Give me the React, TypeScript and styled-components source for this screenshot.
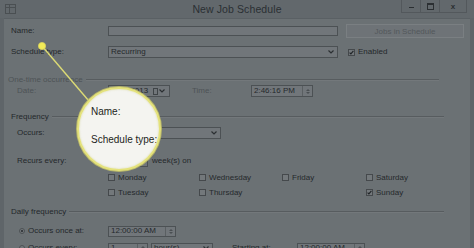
import React from "react";
import styled, { createGlobalStyle } from "styled-components";

const GlobalStyle = createGlobalStyle`
  html, body { margin: 0; padding: 0; width: 474px; height: 248px; overflow: hidden; background: #5f6569; }
  body { font-family: "Liberation Sans", Arial, sans-serif; color: #24282b; }
  #root { width: 474px; height: 248px; }
`;

const Window = styled.div`
  position: relative;
  width: 474px;
  height: 248px;
  overflow: hidden;
  display: flex;
  flex-direction: column;
  background: #5f6569;
`;

const TitleBar = styled.div`
  height: 18px;
  flex-shrink: 0;
  display: grid;
  grid-template-columns: 1fr auto 1fr;
  align-items: start;
  background: #62686c;
`;

const AppIcon = styled.div`
  margin: 4px 0 0 5px;
  width: 9px;
  height: 8px;
  border: 1px solid #4a4f52;
  background: linear-gradient(#4a4f52, #4a4f52) 0 2px / 100% 1px no-repeat,
    linear-gradient(#4a4f52, #4a4f52) 3px 0 / 1px 100% no-repeat;
`;

const Title = styled.div`
  font-size: 10.5px;
  line-height: 19px;
  color: #2a2f33;
  letter-spacing: 0.1px;
`;

const WinButtons = styled.div`
  justify-self: end;
  display: flex;
  margin-right: 7px;
  height: 13px;
`;

const WinButton = styled.div<{ $w: number }>`
  width: ${(p) => p.$w}px;
  height: 13px;
  box-sizing: border-box;
  border-left: 1px solid #53585c;
  border-bottom: 1px solid #53585c;
  &:last-child { border-right: 1px solid #53585c; }
  display: flex;
  align-items: center;
  justify-content: center;
  font-size: 8px;
  color: #2b2f32;
  font-weight: bold;
`;

const MinGlyph = styled.div`
  width: 5px;
  height: 1px;
  margin-top: 3px;
  background: #2b2f32;
`;

const MaxGlyph = styled.div`
  width: 5px;
  height: 4px;
  border: 1px solid #2b2f32;
  border-top-width: 2px;
`;

const Body = styled.div`
  flex: 1;
  margin: 0 4px;
  padding: 0 6px 0 7px;
  background: #6b7174;
  border-top: 1px solid #5a6064;
  display: flex;
  flex-direction: column;
  font-size: 8px;
`;

const Row = styled.div<{ $h: number; $mt: number }>`
  display: flex;
  align-items: center;
  height: ${(p) => p.$h}px;
  margin-top: ${(p) => p.$mt}px;
  flex-shrink: 0;
  white-space: nowrap;
`;

const Label = styled.span<{ $w?: number; $indent?: number; $faded?: boolean; $ml?: number }>`
  flex-shrink: 0;
  box-sizing: border-box;
  width: ${(p) => (p.$w ? `${p.$w}px` : "auto")};
  padding-left: ${(p) => p.$indent ?? 0}px;
  margin-left: ${(p) => p.$ml ?? 0}px;
  color: ${(p) => (p.$faded ? "#4e5356" : "#24282b")};
  font-size: 8px;
  line-height: 10px;
`;

const Field = styled.div<{ $w: number; $h: number; $ml?: number }>`
  flex-shrink: 0;
  box-sizing: border-box;
  width: ${(p) => p.$w}px;
  height: ${(p) => p.$h}px;
  margin-left: ${(p) => p.$ml ?? 0}px;
  border: 1px solid #4c5154;
  background: #71767a;
  display: flex;
  align-items: center;
  padding-left: 2px;
  font-size: 8px;
  color: #25292c;
  overflow: hidden;
`;

const FieldText = styled.span`
  flex: 1;
  line-height: 10px;
`;

const Chevron = styled.svg`
  width: 6px;
  height: 4px;
  margin-right: 3px;
  flex-shrink: 0;
`;

const Spin = styled.div`
  align-self: stretch;
  width: 9px;
  flex-shrink: 0;
  border-left: 1px solid #5a5f62;
  display: flex;
  flex-direction: column;
  align-items: center;
  justify-content: center;
  gap: 1px;
`;

const SpinArrow = styled.div<{ $down?: boolean }>`
  width: 0;
  height: 0;
  border-left: 2px solid transparent;
  border-right: 2px solid transparent;
  ${(p) => (p.$down ? "border-top: 2px solid #4a4f52;" : "border-bottom: 2px solid #4a4f52;")}
`;

const CalButton = styled.div`
  align-self: stretch;
  width: 15px;
  flex-shrink: 0;
  display: flex;
  align-items: center;
  gap: 1px;
  margin-right: 1px;
`;

const CalBox = styled.div`
  width: 5px;
  height: 5px;
  border: 1px solid #3f4447;
`;

const Button = styled.div<{ $w: number; $ml: number }>`
  flex-shrink: 0;
  box-sizing: border-box;
  width: ${(p) => p.$w}px;
  height: 14px;
  margin-left: ${(p) => p.$ml}px;
  border: 1px solid #7a7f82;
  background: #6e7377;
  color: #53585b;
  display: flex;
  align-items: center;
  justify-content: center;
  font-size: 8px;
`;

const Check = styled.div<{ $ml?: number }>`
  flex-shrink: 0;
  box-sizing: border-box;
  width: 7px;
  height: 7px;
  margin-left: ${(p) => p.$ml ?? 0}px;
  border: 1px solid #45494c;
  background: #73787b;
  display: flex;
  align-items: center;
  justify-content: center;
`;

const Radio = styled.div<{ $ml?: number }>`
  flex-shrink: 0;
  box-sizing: border-box;
  width: 6px;
  height: 6px;
  border-radius: 50%;
  margin-left: ${(p) => p.$ml ?? 0}px;
  border: 1px solid #4c5154;
  background: #73787b;
  display: flex;
  align-items: center;
  justify-content: center;
`;

const RadioDot = styled.div`
  width: 2px;
  height: 2px;
  border-radius: 50%;
  background: #25292c;
`;

const GroupRow = styled(Row)`
  gap: 3px;
`;

const GroupLine = styled.div<{ $mr: number }>`
  flex: 1;
  margin-right: ${(p) => p.$mr}px;
  border-top: 1px solid #575c5f;
  border-bottom: 1px solid #73787b;
`;

const DayGrid = styled.div<{ $mt: number }>`
  display: grid;
  grid-template-columns: 91px 83px 84px auto;
  grid-auto-rows: 12px;
  row-gap: 3px;
  margin-left: 97px;
  margin-top: ${(p) => p.$mt}px;
`;

const Day = styled.div`
  display: flex;
  align-items: center;
  gap: 3px;
  font-size: 8px;
  color: #25292c;
  white-space: nowrap;
`;

const Overlay = styled.svg`
  position: absolute;
  left: 0;
  top: 0;
  width: 474px;
  height: 248px;
  pointer-events: none;
`;

const Magnifier = styled.div`
  position: absolute;
  left: 77px;
  top: 87px;
  width: 84px;
  height: 84px;
  box-sizing: border-box;
  border-radius: 50%;
  border: 2px solid #e4e27c;
  box-shadow: 0 0 0 1px #b9b86a, inset 0 0 2px rgba(200, 200, 120, 0.6);
  background: #f4f4f0;
  overflow: hidden;
  display: flex;
  flex-direction: column;
  padding-left: 12px;
`;

const MagLabel = styled.div<{ $mt: number }>`
  margin-top: ${(p) => p.$mt}px;
  font-size: 10px;
  line-height: 12px;
  color: #1d1f21;
  white-space: nowrap;
  display: flex;
  align-items: center;
`;

const MagRule = styled.div`
  width: 12px;
  height: 1px;
  background: #b9bbbb;
  margin-left: 1px;
`;

const ChevronIcon = () => (
  <Chevron viewBox="0 0 6 4">
    <path d="M0.5 0.5 L3 3 L5.5 0.5" fill="none" stroke="#2b2f32" strokeWidth="1.2" />
  </Chevron>
);

const Spinner = () => (
  <Spin>
    <SpinArrow />
    <SpinArrow $down />
  </Spin>
);

const CheckMark = () => (
  <svg width="5" height="5" viewBox="0 0 5 5">
    <path d="M0.6 2.6 L1.9 3.9 L4.4 0.9" fill="none" stroke="#1f2326" strokeWidth="1.1" />
  </svg>
);

const DayItem = ({ name, checked }: { name: string; checked?: boolean }) => (
  <Day>
    <Check>{checked && <CheckMark />}</Check>
    {name}
  </Day>
);

export default function App() {
  return (
    <>
      <GlobalStyle />
      <Window>
        <TitleBar>
          <AppIcon />
          <Title>New Job Schedule</Title>
          <WinButtons>
            <WinButton $w={19}><MinGlyph /></WinButton>
            <WinButton $w={19}><MaxGlyph /></WinButton>
            <WinButton $w={28}>x</WinButton>
          </WinButtons>
        </TitleBar>
        <Body>
          <Row $h={14} $mt={5}>
            <Label $w={97}>Name:</Label>
            <Field $w={230} $h={10} />
            <Button $w={118} $ml={8}>Jobs in Schedule</Button>
          </Row>
          <Row $h={14} $mt={7}>
            <Label $w={97}>Schedule type:</Label>
            <Field $w={230} $h={12}>
              <FieldText>Recurring</FieldText>
              <ChevronIcon />
            </Field>
            <Check $ml={10}><CheckMark /></Check>
            <Label $ml={3}>Enabled</Label>
          </Row>
          <GroupRow $h={10} $mt={16}>
            <Label $faded $ml={-3}>One-time occurrence</Label>
            <GroupLine $mr={25} />
          </GroupRow>
          <Row $h={12} $mt={0}>
            <Label $w={97} $indent={6} $faded>Date:</Label>
            <Field $w={62} $h={12}>
              <FieldText>11/ 3/2013</FieldText>
              <CalButton>
                <CalBox />
                <ChevronIcon />
              </CalButton>
            </Field>
            <Label $w={59} $ml={22} $faded>Time:</Label>
            <Field $w={62} $h={12}>
              <FieldText>2:46:16 PM</FieldText>
              <Spinner />
            </Field>
          </Row>
          <GroupRow $h={10} $mt={15}>
            <Label>Frequency</Label>
            <GroupLine $mr={20} />
          </GroupRow>
          <Row $h={12} $mt={5}>
            <Label $w={97} $indent={6}>Occurs:</Label>
            <Field $w={113} $h={12}>
              <FieldText />
              <ChevronIcon />
            </Field>
          </Row>
          <Row $h={12} $mt={16}>
            <Label $w={97} $indent={6}>Recurs every:</Label>
            <Field $w={40} $h={12}>
              <FieldText />
              <Spinner />
            </Field>
            <Label $ml={4}>week(s) on</Label>
          </Row>
          <DayGrid $mt={4}>
            <DayItem name="Monday" />
            <DayItem name="Wednesday" />
            <DayItem name="Friday" />
            <DayItem name="Saturday" />
            <DayItem name="Tuesday" />
            <DayItem name="Thursday" />
            <span />
            <DayItem name="Sunday" checked />
          </DayGrid>
          <GroupRow $h={10} $mt={9}>
            <Label>Daily frequency</Label>
            <GroupLine $mr={20} />
          </GroupRow>
          <Row $h={12} $mt={8}>
            <Radio $ml={8}><RadioDot /></Radio>
            <Label $w={83} $indent={3}>Occurs once at:</Label>
            <Field $w={68} $h={11}>
              <FieldText>12:00:00 AM</FieldText>
              <Spinner />
            </Field>
          </Row>
          <Row $h={12} $mt={5}>
            <Radio $ml={8} />
            <Label $w={83} $indent={3}>Occurs every:</Label>
            <Field $w={40} $h={11}>
              <FieldText>1</FieldText>
              <Spinner />
            </Field>
            <Field $w={62} $h={11} $ml={3}>
              <FieldText>hour(s)</FieldText>
              <ChevronIcon />
            </Field>
            <Label $w={65} $ml={19}>Starting at:</Label>
            <Field $w={68} $h={11}>
              <FieldText>12:00:00 AM</FieldText>
              <Spinner />
            </Field>
          </Row>
        </Body>
        <Overlay viewBox="0 0 474 248">
          <line x1="42" y1="46" x2="100" y2="114" stroke="#dcda74" strokeWidth="1.4" />
          <circle cx="42" cy="46" r="3.6" fill="#f3ec58" stroke="#d8d060" strokeWidth="0.8" />
        </Overlay>
        <Magnifier>
          <MagLabel $mt={17}>Name:</MagLabel>
          <MagLabel $mt={16}>
            Schedule type:
            <MagRule />
          </MagLabel>
        </Magnifier>
      </Window>
    </>
  );
}
